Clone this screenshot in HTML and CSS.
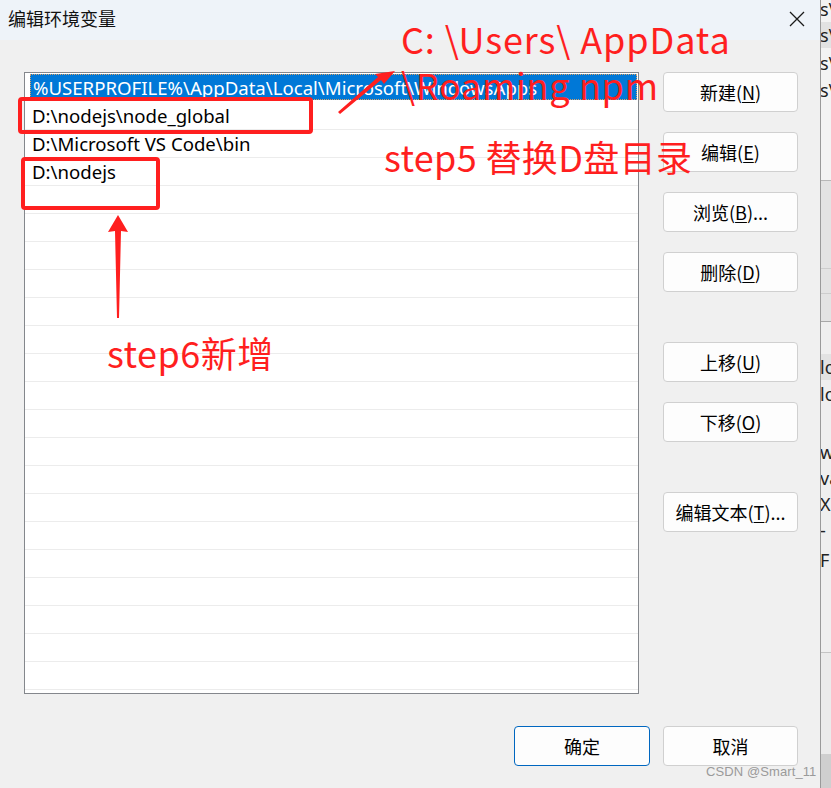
FILE: index.html
```html
<!DOCTYPE html>
<html lang="zh-CN">
<head>
<meta charset="utf-8">
<title>编辑环境变量</title>
<link rel="stylesheet" href="styles.css">
</head>
<body>
<div class="screen">
  <div class="dialog">
    <div class="titlebar">
      <span class="title">编辑环境变量</span>
      <svg class="close" width="16" height="16" viewBox="0 0 16 16"><path d="M1 1 L15 15 M15 1 L1 15" stroke="#1a1a1a" stroke-width="1.3" fill="none"/></svg>
    </div>
    <div class="content">
      <div class="main">
        <div class="list">
          <div class="row selected"><span class="sel">%USERPROFILE%\AppData\Local\Microsoft\WindowsApps</span></div>
          <div class="row">D:\nodejs\node_global</div>
          <div class="row">D:\Microsoft VS Code\bin</div>
          <div class="row">D:\nodejs</div>
          <div class="row"></div><div class="row"></div><div class="row"></div><div class="row"></div>
          <div class="row"></div><div class="row"></div><div class="row"></div><div class="row"></div>
          <div class="row"></div><div class="row"></div><div class="row"></div><div class="row"></div>
          <div class="row"></div><div class="row"></div><div class="row"></div><div class="row"></div>
          <div class="row"></div><div class="row"></div>
        </div>
        <div class="buttons">
          <button class="btn">新建(<u>N</u>)</button>
          <button class="btn gap-s">编辑(<u>E</u>)</button>
          <button class="btn gap-s">浏览(<u>B</u>)...</button>
          <button class="btn gap-s">删除(<u>D</u>)</button>
          <button class="btn gap-l">上移(<u>U</u>)</button>
          <button class="btn gap-s">下移(<u>O</u>)</button>
          <button class="btn gap-l">编辑文本(<u>T</u>)...</button>
        </div>
      </div>
      <div class="footer">
        <button class="btn default">确定</button>
        <button class="btn">取消</button>
      </div>
    </div>
  </div>
  <div class="bgwin">
    <div class="bg-top">
      <div class="frag t1">s\</div>
      <div class="frag t2 hl">s\</div>
      <div class="frag t3">s\</div>
      <div class="frag t4">s\</div>
    </div>
    <div class="bg-band">
      <div class="band-line l1"></div>
      <div class="band-line l2"></div>
    </div>
    <div class="bg-mid">
      <div class="frag m-lo hl">lo</div>
      <div class="frag m-lo2">lo</div>
      <div class="frag m-ws">ws</div>
      <div class="frag">va</div>
      <div class="frag">X</div>
      <div class="frag">-</div>
      <div class="frag m-f">F</div>
    </div>
    <div class="bg-low"></div>
    <div class="bg-bottom"></div>
  </div>

  <div class="annot box1"></div>
  <div class="annot box2"></div>
  <svg class="annot arrow-up" width="24" height="106" viewBox="0 0 24 106">
    <polygon points="12,0 22,17 15,16 13,103 11,103 9,16 2,17" fill="#ff1f1f"/>
  </svg>
  <svg class="annot arrow-diag" width="60" height="46" viewBox="0 0 60 46">
    <polygon points="57,1 46,14 43,10 2,44 0,42 40,7 37,4" fill="#ff1f1f"/>
  </svg>
  <div class="annot note n1">C: \Users\ AppData</div>
  <div class="annot note n2">\Roaming npm</div>
  <div class="annot note n3">step5 替换D盘目录</div>
  <div class="annot note n4">step6新增</div>
  <div class="annot watermark">CSDN @Smart_11</div>
</div>
</body>
</html>
```
FILE: styles.css
```css
* { box-sizing: border-box; }
html, body { margin: 0; padding: 0; }
body {
  width: 831px;
  height: 788px;
  overflow: hidden;
  font-family: "Noto Sans", "Noto Sans CJK SC", sans-serif;
  font-size: 18px;
  color: #000;
}
.screen {
  position: relative;
  width: 831px;
  height: 788px;
  display: flex;
}
.dialog {
  width: 821px;
  height: 788px;
  background: #f0f0f0;
  border-right: 1px solid #9a9a9a;
  display: flex;
  flex-direction: column;
}
.titlebar {
  height: 40px;
  background: #eef3f9;
  display: flex;
  align-items: center;
  justify-content: space-between;
  padding: 0 15px 4px 8px;
}
.title {
  font-family: "Noto Sans CJK SC", sans-serif;
  font-size: 18px;
  color: #111;
}
.close { display: block; margin-top: 2px; }
.content {
  padding: 32px 22px 0 24px;
}
.main {
  display: flex;
  gap: 24px;
}
.list {
  width: 615px;
  height: 622px;
  background: #fff;
  border: 1px solid #84878c;
  padding-top: 1px;
  overflow: hidden;
}
.row {
  height: 28px;
  border-bottom: 1px solid #ececec;
  padding-left: 7px;
  line-height: 27px;
  white-space: nowrap;
  font-family: "Noto Sans", "Noto Sans CJK SC", sans-serif;
  font-size: 18.6px;
  color: #000;
}
.row.selected {
  padding-left: 5px;
  padding-right: 1px;
  border-bottom-color: #fff;
}
.sel {
  display: block;
  height: 26px;
  line-height: 25px;
  background: #0078d7;
  color: #fff;
  padding-left: 2px;
  border: 1px dotted #d9a066;
  overflow: hidden;
}
.buttons {
  width: 135px;
  display: flex;
  flex-direction: column;
}
.btn {
  width: 135px;
  height: 40px;
  background: #fdfdfd;
  border: 1px solid #d0d0d0;
  border-radius: 4px;
  font-family: "Noto Sans CJK SC", sans-serif;
  font-size: 18px;
  color: #000;
  padding: 0;
  line-height: 1;
}
.btn u { text-underline-offset: 2px; }
.gap-s { margin-top: 20px; }
.gap-l { margin-top: 50px; }
.footer {
  margin-top: 32px;
  display: flex;
  justify-content: flex-end;
  gap: 13px;
}
.btn.default {
  width: 136px;
  border: 1px solid #0067c0;
}

/* background window strip */
.bgwin {
  flex: 1;
  display: flex;
  flex-direction: column;
  overflow: hidden;
  background: #efefef;
  font-family: "Noto Sans", sans-serif;
  font-size: 18px;
  color: #222;
}
.frag {
  height: 26px;
  line-height: 26px;
  white-space: nowrap;
  margin-left: -1px;
}
.frag.hl { background: #e2e2e2; }
.bg-top {
  height: 181px;
  background: #f3f3f3;
  border-bottom: 1px solid #b8b8b8;
}
.t1 { margin-top: -4px; }
.t2 { margin-top: 0; }
.t3 { margin-top: 2px; }
.t4 { margin-top: 1px; }
.bg-band {
  height: 141px;
  background: #e3e3e3;
  border-bottom: 1px solid #a8a8a8;
}
.band-line { height: 1px; background: #cdcdcd; }
.l1 { margin-top: 87px; }
.l2 { margin-top: 24px; }
.bg-mid {
  height: 331px;
  background: #efefef;
  border-bottom: 1px solid #c4c4c4;
}
.m-lo { margin-top: 32px; }
.m-lo2 { margin-top: 1px; }
.m-ws { margin-top: 32px; }
.m-f { margin-top: 4px; }
.bg-low {
  height: 101px;
  background: #ebebeb;
}
.bg-bottom {
  flex: 1;
  background: #cfcfcf;
}

/* annotations */
.annot { position: absolute; }
.box1 {
  left: 18px; top: 97px;
  width: 295px; height: 37px;
  border: 4px solid #ff1f1f;
  border-radius: 4px;
}
.box2 {
  left: 21px; top: 157px;
  width: 139px; height: 53px;
  border: 4px solid #ff1f1f;
  border-radius: 4px;
}
.arrow-up { left: 106px; top: 215px; }
.arrow-diag { left: 338px; top: 70px; }
.note {
  font-family: "Noto Sans CJK SC", sans-serif;
  color: #ff1f1f;
  font-size: 36px;
  line-height: 1;
  white-space: nowrap;
}
.n1 { left: 401px; top: 20px; letter-spacing: 0.9px; }
.n2 { left: 401px; top: 66px; letter-spacing: 0.7px; }
.n3 { left: 384px; top: 138px; letter-spacing: 0.35px; }
.n4 { left: 107px; top: 334px; letter-spacing: 0.5px; }
.watermark {
  left: 706px; top: 764px;
  font-family: "Liberation Sans", sans-serif;
  font-size: 13px;
  color: #9a9a9a;
  letter-spacing: 0.1px;
}
```
